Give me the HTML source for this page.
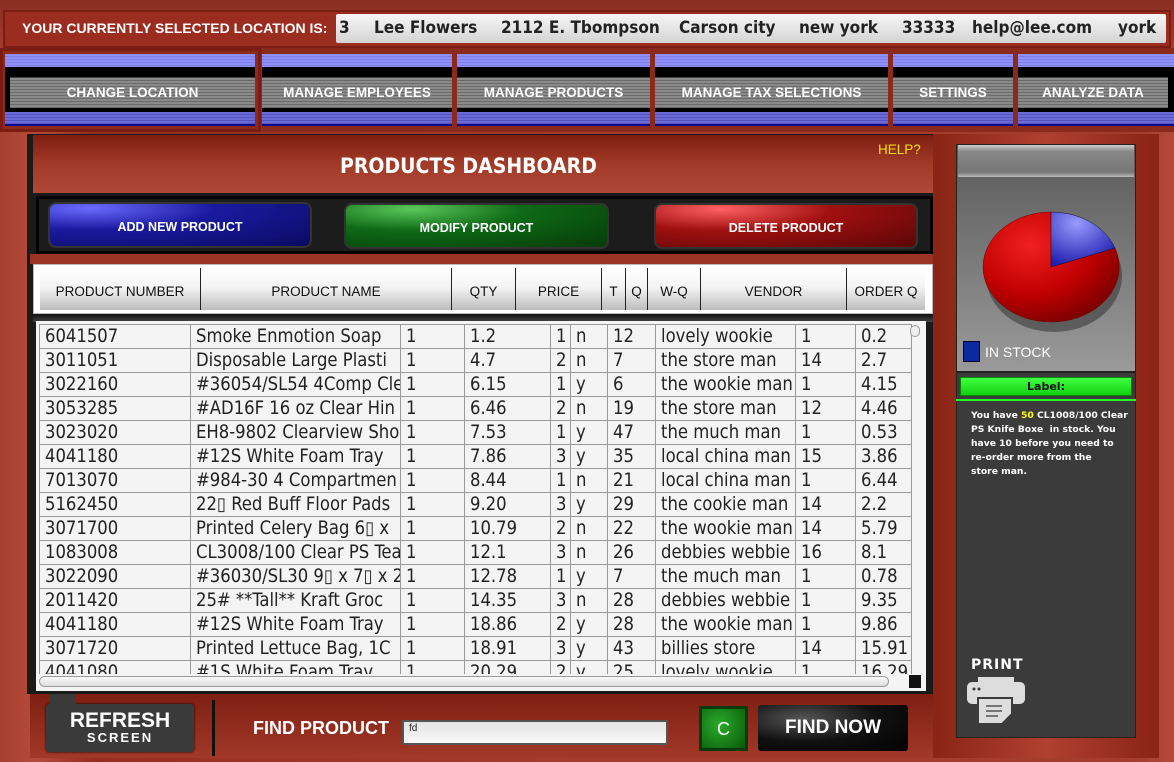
<!DOCTYPE html>
<html><head><meta charset="utf-8">
<style>
*{margin:0;padding:0;box-sizing:border-box}
body{width:1174px;height:762px;overflow:hidden;position:relative;background:#a83c2c;font-family:"Liberation Sans",sans-serif}
.abs{position:absolute}
.navbtn{position:absolute;top:54px;height:72px;background:#000}
.navbtn .pt{position:absolute;left:0;right:0;top:0;height:13px;background:repeating-linear-gradient(180deg,#8f8ff8 0 2px,#7e7ee8 2px 3px)}
.navbtn .pb{position:absolute;left:0;right:0;bottom:0;height:14px;background:repeating-linear-gradient(180deg,#6a6ad8 0 2px,#5555c0 2px 3px);border-bottom:2px solid #0a0a90}
.navbtn .g{position:absolute;left:0;right:0;top:24px;height:30px;background:repeating-linear-gradient(180deg,#8a8a8a 0 2px,#6a6a6a 2px 3px);color:#fff;font-weight:bold;font-size:13.5px;text-align:center;line-height:30px;box-shadow:0 -1px 0 #444}
.th{position:absolute;top:268px;height:42px;border-right:1px solid #222;font-size:13.5px;color:#111;text-align:center;line-height:48px}
table{border-collapse:collapse;font-family:"DejaVu Sans Condensed","DejaVu Sans",sans-serif;font-size:18.3px;color:#222}
td{height:24px;border:1px solid #999;padding:0 0 0 5px;white-space:nowrap;overflow:hidden;background:#f4f4f4;line-height:22px}
.bigbtn{position:absolute;top:202px;height:46px;border-radius:8px;color:#fff;font-weight:bold;font-size:12.5px;text-align:center;line-height:46px}
.loc span{position:absolute;top:0}
</style></head><body>
<div class="abs" style="left:0;top:0;width:1174px;height:48px;background:linear-gradient(180deg,#8a2e22,#a53a2c)"></div>
<div class="abs" style="left:3px;top:10px;width:1168px;height:38px;background:#9a2d20;border:2px solid #7a1e14"></div>
<div class="abs" style="left:22px;top:20px;color:#fff;font-weight:bold;font-size:14px">YOUR CURRENTLY SELECTED LOCATION IS:</div>
<div class="abs loc" style="left:336px;top:14px;width:830px;height:29px;background:linear-gradient(180deg,#f6f6f6,#d4d4d4);border-radius:2px;font-family:'DejaVu Sans Condensed','DejaVu Sans',sans-serif;font-weight:bold;font-size:17px;color:#222;line-height:29px;white-space:nowrap;overflow:hidden">
<span style="left:3px">3</span><span style="left:38px">Lee Flowers</span><span style="left:165px">2112 E. Tbompson</span><span style="left:343px">Carson city</span><span style="left:463px">new york</span><span style="left:566px">33333</span><span style="left:636px">help@lee.com</span><span style="left:782px">york</span><span style="left:812px;font-size:12px">&#9662;</span></div>
<div class="abs" style="left:0;top:48px;width:1174px;height:84px;background:#8a2a1c"></div>
<div class="abs" style="left:0;top:48px;width:261px;height:84px;border:3px solid #7a1c12;background:#8e2a1c"></div>
<div class="navbtn" style="left:5px;width:250px"><div class="pt"></div><div class="g" style="left:5px;right:0">CHANGE LOCATION</div><div class="pb"></div></div>
<div class="navbtn" style="left:262px;width:190px"><div class="pt"></div><div class="g">MANAGE EMPLOYEES</div><div class="pb"></div></div>
<div class="navbtn" style="left:457px;width:193px"><div class="pt"></div><div class="g">MANAGE PRODUCTS</div><div class="pb"></div></div>
<div class="navbtn" style="left:655px;width:233px"><div class="pt"></div><div class="g">MANAGE TAX SELECTIONS</div><div class="pb"></div></div>
<div class="navbtn" style="left:893px;width:120px"><div class="pt"></div><div class="g">SETTINGS</div><div class="pb"></div></div>
<div class="navbtn" style="left:1018px;width:156px"><div class="pt"></div><div class="g" style="right:6px">ANALYZE DATA</div><div class="pb"></div></div>
<div class="abs" style="left:0;top:132px;width:1174px;height:630px;background:linear-gradient(90deg,#a8402f,#b54a3a 3%,#962e20 8%,#a63c2c 50%,#a63c2c 97%,#b54a3a)"></div>
<div class="abs" style="left:27px;top:134px;width:910px;height:560px;background:#1a1a1a"></div>
<div class="abs" style="left:33px;top:135px;width:900px;height:58px;background:linear-gradient(180deg,#7e1d10,#a23a28 50%,#b04838);"></div>
<div class="abs" style="left:340px;top:154px;color:#fff;font-weight:bold;font-size:21px;font-family:'DejaVu Sans Condensed',sans-serif">PRODUCTS DASHBOARD</div>
<div class="abs" style="left:878px;top:142px;color:#f0e000;font-size:13.5px">HELP?</div>
<div class="abs" style="left:36px;top:196px;width:897px;height:58px;background:#1c1c1c;border:3px solid #000"></div>
<div class="bigbtn" style="left:48px;width:264px;background:radial-gradient(ellipse at 15% 10%,#6a6aff,#1a1aa0 40%,#0a0a60);border:2px solid #333">ADD NEW PRODUCT</div>
<div class="bigbtn" style="left:344px;width:265px;background:radial-gradient(ellipse at 25% 10%,#5ac85a,#0e6a16 40%,#053a08);border:2px solid #333;top:203px">MODIFY PRODUCT</div>
<div class="bigbtn" style="left:654px;width:264px;background:radial-gradient(ellipse at 25% 10%,#ff6060,#a01010 40%,#5a0606);border:2px solid #333;top:203px">DELETE PRODUCT</div>
<div class="abs" style="left:30px;top:254px;width:904px;height:10px;background:#9a3424"></div>
<div class="abs" style="left:33px;top:264px;width:900px;height:50px;background:#fff;border:1px solid #bbb"></div>
<div class="abs" style="left:40px;top:268px;width:885px;height:42px;background:linear-gradient(180deg,#fff 0%,#f4f4f4 45%,#bdbdbd 100%)"></div>
<div class="th" style="left:40px;width:161px">PRODUCT NUMBER</div>
<div class="th" style="left:201px;width:251px">PRODUCT NAME</div>
<div class="th" style="left:452px;width:64px">QTY</div>
<div class="th" style="left:516px;width:86px">PRICE</div>
<div class="th" style="left:602px;width:24px">T</div>
<div class="th" style="left:626px;width:22px">Q</div>
<div class="th" style="left:648px;width:53px">W-Q</div>
<div class="th" style="left:701px;width:146px">VENDOR</div>
<div class="th" style="left:847px;width:78px;border-right:none">ORDER Q</div>
<div class="abs" style="left:33px;top:314px;width:900px;height:8px;background:linear-gradient(180deg,#111,#444)"></div>
<div class="abs" style="left:36px;top:321px;width:890px;height:370px;background:#f4f4f4;overflow:hidden">
<table style="position:absolute;left:3px;top:3px;table-layout:fixed;width:872px">
<colgroup><col style="width:151px"><col style="width:210px"><col style="width:64px"><col style="width:86px"><col style="width:20px"><col style="width:37px"><col style="width:48px"><col style="width:140px"><col style="width:60px"><col style="width:56px"></colgroup>
<tr><td>6041507</td><td>Smoke Enmotion Soap</td><td>1</td><td>1.2</td><td>1</td><td>n</td><td>12</td><td>lovely wookie</td><td>1</td><td>0.2</td></tr>
<tr><td>3011051</td><td>Disposable Large Plasti</td><td>1</td><td>4.7</td><td>2</td><td>n</td><td>7</td><td>the store man</td><td>14</td><td>2.7</td></tr>
<tr><td>3022160</td><td>#36054/SL54 4Comp Cle</td><td>1</td><td>6.15</td><td>1</td><td>y</td><td>6</td><td>the wookie man</td><td>1</td><td>4.15</td></tr>
<tr><td>3053285</td><td>#AD16F 16 oz Clear Hin</td><td>1</td><td>6.46</td><td>2</td><td>n</td><td>19</td><td>the store man</td><td>12</td><td>4.46</td></tr>
<tr><td>3023020</td><td>EH8-9802 Clearview Sho</td><td>1</td><td>7.53</td><td>1</td><td>y</td><td>47</td><td>the much man</td><td>1</td><td>0.53</td></tr>
<tr><td>4041180</td><td>#12S White Foam Tray</td><td>1</td><td>7.86</td><td>3</td><td>y</td><td>35</td><td>local china man</td><td>15</td><td>3.86</td></tr>
<tr><td>7013070</td><td>#984-30 4 Compartmen</td><td>1</td><td>8.44</td><td>1</td><td>n</td><td>21</td><td>local china man</td><td>1</td><td>6.44</td></tr>
<tr><td>5162450</td><td>22▯ Red Buff Floor Pads</td><td>1</td><td>9.20</td><td>3</td><td>y</td><td>29</td><td>the cookie man</td><td>14</td><td>2.2</td></tr>
<tr><td>3071700</td><td>Printed Celery Bag 6▯ x</td><td>1</td><td>10.79</td><td>2</td><td>n</td><td>22</td><td>the wookie man</td><td>14</td><td>5.79</td></tr>
<tr><td>1083008</td><td>CL3008/100 Clear PS Tea</td><td>1</td><td>12.1</td><td>3</td><td>n</td><td>26</td><td>debbies webbie</td><td>16</td><td>8.1</td></tr>
<tr><td>3022090</td><td>#36030/SL30 9▯ x 7▯ x 2</td><td>1</td><td>12.78</td><td>1</td><td>y</td><td>7</td><td>the much man</td><td>1</td><td>0.78</td></tr>
<tr><td>2011420</td><td>25# **Tall** Kraft Groc</td><td>1</td><td>14.35</td><td>3</td><td>n</td><td>28</td><td>debbies webbie</td><td>1</td><td>9.35</td></tr>
<tr><td>4041180</td><td>#12S White Foam Tray</td><td>1</td><td>18.86</td><td>2</td><td>y</td><td>28</td><td>the wookie man</td><td>1</td><td>9.86</td></tr>
<tr><td>3071720</td><td>Printed Lettuce Bag, 1C</td><td>1</td><td>18.91</td><td>3</td><td>y</td><td>43</td><td>billies store</td><td>14</td><td>15.91</td></tr>
<tr><td>4041080</td><td>#1S White Foam Tray</td><td>1</td><td>20.29</td><td>2</td><td>y</td><td>25</td><td>lovely wookie</td><td>1</td><td>16.29</td></tr>
</table>
<div class="abs" style="left:0;top:353px;width:890px;height:17px;background:#f4f4f4"></div>
<div class="abs" style="left:3px;top:355px;width:850px;height:11px;border:1px solid #999;border-radius:6px;background:linear-gradient(180deg,#fafafa,#ddd)"></div>
<div class="abs" style="left:873px;top:354px;width:12px;height:13px;background:#111"></div>
<div class="abs" style="left:874px;top:4px;width:10px;height:12px;border:1px solid #999;border-radius:5px;background:#eee"></div>
</div>
<div class="abs" style="left:30px;top:694px;width:904px;height:64px;background:linear-gradient(180deg,#7e1f12,#a23828)"></div>
<div class="abs" style="left:46px;top:704px;width:148px;height:48px;background:#3a3a3a;border-radius:3px;box-shadow:0 0 2px #000;color:#fff;text-align:center;font-weight:bold">
<div style="font-size:21px;line-height:22px;margin-top:6px">REFRESH</div><div style="font-size:13px;letter-spacing:2px;line-height:12px">SCREEN</div></div>
<div class="abs" style="left:49px;top:694px;width:27px;height:12px;background:#3a3a3a"></div>
<div class="abs" style="left:212px;top:700px;width:3px;height:56px;background:#111"></div>
<div class="abs" style="left:253px;top:718px;color:#fff;font-weight:bold;font-size:18px">FIND PRODUCT</div>
<div class="abs" style="left:402px;top:720px;width:266px;height:25px;background:linear-gradient(180deg,#e4e4e4,#f8f8f8);border:2px solid #555;font-size:10px;padding:1px 5px;color:#222">fd</div>
<div class="abs" style="left:699px;top:706px;width:49px;height:45px;background:radial-gradient(circle at 40% 40%,#2aaa2a,#0a5a0a);border:3px solid #0c3a0c;color:#fff;font-size:18px;text-align:center;line-height:40px">C</div>
<div class="abs" style="left:758px;top:705px;width:150px;height:46px;background:radial-gradient(ellipse at 30% 30%,#555,#111 50%,#000);border-radius:3px;color:#fff;font-weight:bold;font-size:19px;text-align:center;line-height:46px">FIND NOW</div>
<div class="abs" style="left:933px;top:134px;width:226px;height:624px;background:linear-gradient(90deg,#8a2414,#b04030 50%,#8a2414)"></div>
<div class="abs" style="left:956px;top:144px;width:180px;height:228px;background:linear-gradient(180deg,#5a5a5a,#7a7a7a 50%,#9a9a9a);border:1px solid #222"></div>
<div class="abs" style="left:958px;top:145px;width:176px;height:32px;background:linear-gradient(180deg,#ccc,#888 20%,#777 85%,#bbb)"></div>
<svg class="abs" style="left:960px;top:190px" width="180" height="160">
<defs><radialGradient id="rg" cx="35%" cy="30%" r="75%"><stop offset="0" stop-color="#f02020"/><stop offset="0.6" stop-color="#c00000"/><stop offset="1" stop-color="#7a0000"/></radialGradient>
<radialGradient id="bg" cx="40%" cy="20%" r="80%"><stop offset="0" stop-color="#9a9aff"/><stop offset="1" stop-color="#2020b0"/></radialGradient></defs>
<ellipse cx="94" cy="86" rx="68" ry="56" fill="#222" opacity="0.45"/>
<path d="M91 77 L91 22 A68 55 0 0 0 91 132 A68 55 0 0 0 155 58 Z" fill="url(#rg)" stroke="#700" stroke-width="0.5"/>
<path d="M91 77 L91 22 A68 55 0 0 1 155 58 Z" fill="url(#bg)" stroke="#113" stroke-width="0.5"/>
</svg>
<div class="abs" style="left:963px;top:341px;width:17px;height:21px;background:#0a2aa0;border:1px solid #002"></div>
<div class="abs" style="left:985px;top:344px;color:#fff;font-size:14px">IN STOCK</div>
<div class="abs" style="left:956px;top:372px;width:180px;height:366px;background:#3b3b3b;border:1px solid #222"></div>
<div class="abs" style="left:960px;top:377px;width:172px;height:19px;background:linear-gradient(180deg,#40ff40,#10d010);border:1px solid #080;font-weight:bold;font-size:11px;text-align:center;line-height:18px;color:#111;font-family:'DejaVu Sans',sans-serif">Label:</div>
<div class="abs" style="left:956px;top:399px;width:180px;height:2px;background:#2f2"></div>
<div class="abs" style="left:971px;top:409px;width:165px;color:#fff;font-weight:bold;font-size:9.2px;line-height:14px;font-family:'DejaVu Sans',sans-serif;white-space:nowrap;overflow:hidden">You have <span style="color:#ff0">50</span> CL1008/100 Clear<br>PS Knife Boxe&nbsp; in stock. You<br>have 10 before you need to<br>re-order more from the<br>store man.</div>
<div class="abs" style="left:971px;top:657px;color:#fff;font-weight:bold;font-size:14px;letter-spacing:1px;font-family:'DejaVu Sans',sans-serif">PRINT</div>
<svg class="abs" style="left:966px;top:676px" width="62" height="50"><rect x="1" y="6" width="58" height="22" rx="5" fill="#ddd"/><rect x="12" y="1" width="36" height="6" fill="#ddd"/><circle cx="8" cy="13" r="1.5" fill="#3b3b3b"/><circle cx="13" cy="13" r="1.5" fill="#3b3b3b"/><path d="M12 22 H46 V38 L36 48 H12 Z" fill="#ddd" stroke="#3b3b3b" stroke-width="2"/><path d="M20 30 H36 M20 35 H36 M20 40 H32" stroke="#555" stroke-width="1.5"/></svg>
</body></html>
